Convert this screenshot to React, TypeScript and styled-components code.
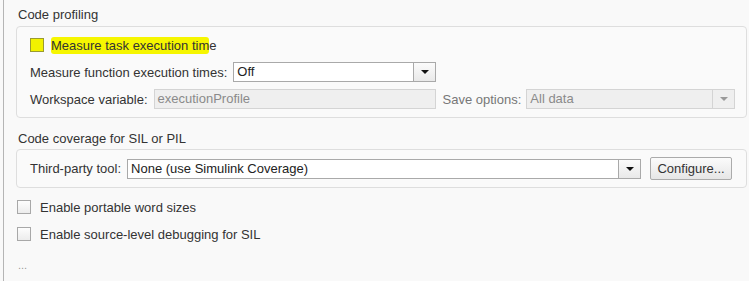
import React from "react";
import styled, { createGlobalStyle } from "styled-components";

const GlobalStyle = createGlobalStyle`
  html, body {
    margin: 0;
    padding: 0;
    background: #f9f9f9;
  }
  body {
    font-family: "Liberation Sans", Arial, sans-serif;
    font-size: 13px;
    color: #333;
  }
`;

const Page = styled.div`
  height: 281px;
  padding-left: 3px;
  box-sizing: border-box;
`;

const Pane = styled.div`
  height: 100%;
  border-left: 1px solid #b5b5b5;
  padding: 7px 2px 0 12px;
  box-sizing: border-box;
  display: flex;
  flex-direction: column;
`;

const GroupTitle = styled.div<{ $gap: number }>`
  height: 16px;
  line-height: 16px;
  padding-left: 2px;
  margin-bottom: ${({ $gap }) => $gap}px;
`;

const Panel = styled.div<{ $pad: number; $after: number }>`
  border: 1px solid #dedede;
  border-radius: 4px;
  background: #fafafa;
  padding: ${({ $pad }) => `${$pad}px 11px ${$pad}px 13px`};
  display: flex;
  flex-direction: column;
  gap: 7px;
  margin-bottom: ${({ $after }) => $after}px;
`;

const Row = styled.div<{ $height?: number }>`
  display: flex;
  align-items: center;
  height: ${({ $height }) => $height ?? 20}px;
`;

const Label = styled.span`
  white-space: nowrap;
  margin-right: 6px;
`;

const Box = styled.span<{ $highlight?: boolean }>`
  width: 12px;
  height: 12px;
  border: 1px solid ${({ $highlight }) => ($highlight ? "#9a9a30" : "#a8a8a8")};
  background: ${({ $highlight }) =>
    $highlight ? "#f2f200" : "linear-gradient(#fdfdfd, #ececec)"};
  margin-right: ${({ $highlight }) => ($highlight ? 7 : 9)}px;
  flex: none;
`;

const Highlight = styled.span`
  background: #f6f600;
  border-radius: 3px;
  padding: 1px 0;
`;

const Select = styled.div<{ $width: number; $disabled?: boolean }>`
  width: ${({ $width }) => $width}px;
  height: 20px;
  box-sizing: border-box;
  border: 1px solid ${({ $disabled }) => ($disabled ? "#d4d4d4" : "#a9a9a9")};
  background: ${({ $disabled }) => ($disabled ? "#efefef" : "#fff")};
  color: ${({ $disabled }) => ($disabled ? "#8a8a8a" : "#222")};
  display: flex;
  align-items: stretch;
  flex: none;
`;

const SelectValue = styled.span`
  flex: 1;
  padding-left: 3px;
  line-height: 18px;
  white-space: nowrap;
  overflow: hidden;
`;

const Arrow = styled.span<{ $disabled?: boolean }>`
  width: 21px;
  border-left: 1px solid ${({ $disabled }) => ($disabled ? "#d4d4d4" : "#a9a9a9")};
  background: ${({ $disabled }) =>
    $disabled ? "#efefef" : "linear-gradient(#fbfbfb, #e9e9e9)"};
  display: flex;
  align-items: center;
  justify-content: center;

  &::after {
    content: "";
    border-left: 4px solid transparent;
    border-right: 4px solid transparent;
    border-top: 4px solid ${({ $disabled }) => ($disabled ? "#9a9a9a" : "#111")};
  }
`;

const TextField = styled.div<{ $width: number }>`
  width: ${({ $width }) => $width}px;
  height: 20px;
  box-sizing: border-box;
  border: 1px solid #d4d4d4;
  background: #efefef;
  color: #8a8a8a;
  padding-left: 3px;
  line-height: 18px;
  flex: none;
`;

const Disabled = styled.span`
  color: #777;
  white-space: nowrap;
  margin: 0 5px 0 7px;
`;

const Button = styled.button`
  height: 23px;
  width: 82px;
  margin-left: 9px;
  box-sizing: border-box;
  border: 1px solid #ababab;
  border-radius: 2px;
  background: linear-gradient(#fbfbfb, #e6e6e6);
  font: inherit;
  color: #333;
  padding: 0;
`;

const CheckRow = styled.div`
  display: flex;
  align-items: center;
  height: 20px;
  padding-left: 1px;
  margin-bottom: 7px;
`;

const Ellipsis = styled.div`
  padding-left: 2px;
  margin-top: 8px;
  color: #999;
  font-size: 11px;
`;

type SelectProps = { value: string; width: number; disabled?: boolean };

const Dropdown: React.FC<SelectProps> = ({ value, width, disabled }) => (
  <Select $width={width} $disabled={disabled}>
    <SelectValue>{value}</SelectValue>
    <Arrow $disabled={disabled} />
  </Select>
);

export default function App() {
  return (
    <>
      <GlobalStyle />
      <Page>
        <Pane>
          <GroupTitle $gap={3}>Code profiling</GroupTitle>
          <Panel $pad={8} $after={13}>
            <Row>
              <Box $highlight />
              <Highlight>Measure task execution tim</Highlight>e
            </Row>
            <Row>
              <Label>Measure function execution times:</Label>
              <Dropdown value="Off" width={203} />
            </Row>
            <Row>
              <Label>Workspace variable:</Label>
              <TextField $width={282}>executionProfile</TextField>
              <Disabled>Save options:</Disabled>
              <Dropdown value="All data" width={209} disabled />
            </Row>
          </Panel>
          <GroupTitle $gap={2}>Code coverage for SIL or PIL</GroupTitle>
          <Panel $pad={7} $after={9}>
            <Row $height={23}>
              <Label>Third-party tool:</Label>
              <Dropdown value="None (use Simulink Coverage)" width={514} />
              <Button>Configure...</Button>
            </Row>
          </Panel>
          <CheckRow>
            <Box />
            Enable portable word sizes
          </CheckRow>
          <CheckRow>
            <Box />
            Enable source-level debugging for SIL
          </CheckRow>
          <Ellipsis>...</Ellipsis>
        </Pane>
      </Page>
    </>
  );
}
